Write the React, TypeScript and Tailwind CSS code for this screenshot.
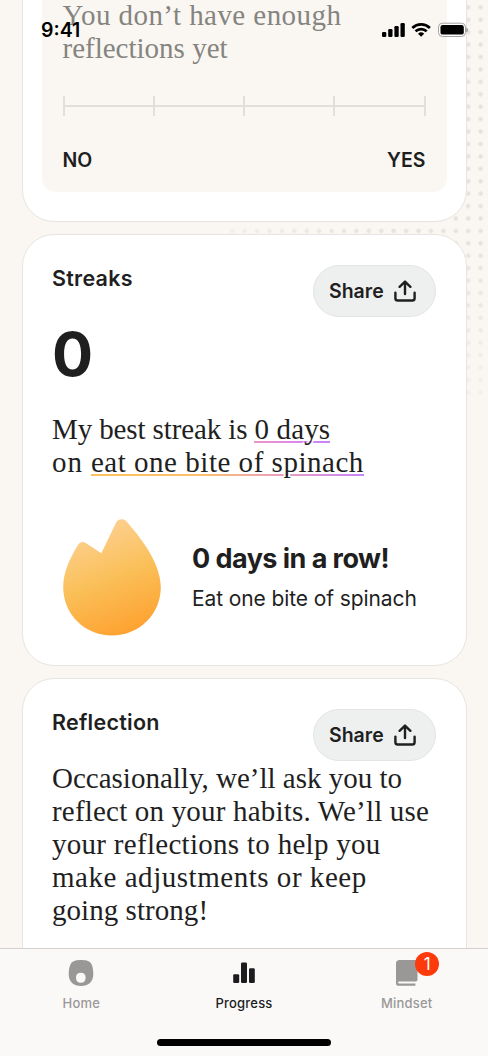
import type { ReactNode } from "react";
import clsx from "clsx";

const SERIF = "font-['Liberation_Serif',serif] text-[29px] leading-[33px]";

function ShareIcon() {
  return (
    <svg
      width="22"
      height="22"
      viewBox="0 0 22 22"
      fill="none"
      stroke="currentColor"
      strokeWidth="2.4"
      strokeLinecap="round"
      strokeLinejoin="round"
    >
      <path d="M11 14V1.800M5.600 6.800 11 1.600l5.400 5.200" />
      <path d="M1.400 12.600v5.600c0 1.600.7 2.300 2.300 2.300h14.600c1.600 0 2.300-.7 2.300-2.300v-5.600" />
    </svg>
  );
}

function ShareButton() {
  return (
    <button className="flex h-[52px] w-[123px] items-center justify-between rounded-full border border-[#e2e5e4] bg-[#eef0ef] pr-[19px] pl-[15px] text-[19.5px] font-semibold">
      <span className="pt-px">Share</span>
      <ShareIcon />
    </button>
  );
}

function Card({ className, children }: { className?: string; children: ReactNode }) {
  return (
    <section className={clsx("rounded-[32px] border border-[#e6e5e2] bg-white", className)}>
      {children}
    </section>
  );
}

function CardHeader({ title }: { title: string }) {
  return (
    <div className="flex items-start justify-between">
      <h2 className="text-[21.5px] leading-[26px] font-semibold tracking-[0.25px]">{title}</h2>
      <ShareButton />
    </div>
  );
}

function Scale() {
  return (
    <div className="mt-[30px] flex h-5 w-[363px] items-center justify-between bg-[linear-gradient(#e2dfd8,#e2dfd8)] bg-[length:100%_2px] bg-center bg-no-repeat">
      {[0, 1, 2, 3, 4].map((i) => (
        <span key={i} className="h-5 w-[2px] bg-[#e2dfd8]" />
      ))}
    </div>
  );
}

function Flame() {
  return (
    <svg width="98" height="118" viewBox="0 0 98 118">
      <defs>
        <linearGradient id="flame" x1="0.3" y1="0" x2="0.62" y2="1">
          <stop offset="0" stopColor="#fdd297" />
          <stop offset="0.5" stopColor="#fac05a" />
          <stop offset="1" stopColor="#fea230" />
        </linearGradient>
      </defs>
      <path
        fill="url(#flame)"
        d="M53.300 4.200C54.800 1 60.500.1 63.300 3.300C72 13.500 97.800 42 97.800 69C97.800 96.500 76 117.500 49 117.500C22 117.500.2 96.500.2 69C.2 53 8 38.500 15.300 26.500C17 23.700 20 23.200 22.800 25L38.300 35.200Z"
      />
    </svg>
  );
}

function StatusBar() {
  return (
    <div className="absolute inset-x-0 top-0 flex h-[60px] items-center justify-between pr-[20px] pl-[41px] text-black">
      <span className="text-[19.5px] leading-6 font-semibold">9:41</span>
      <svg width="87" height="16" viewBox="0 0 87 16">
        <rect x="1" y="10" width="4.300" height="5" rx="1.300" />
        <rect x="7.200" y="7" width="4.300" height="8" rx="1.300" />
        <rect x="13.400" y="4" width="4.300" height="11" rx="1.300" />
        <rect x="19.500" y="1" width="4.300" height="14" rx="1.300" />
        <g fill="none" stroke="#000" strokeWidth="2.700">
          <path d="M31.300 5.900a13 13 0 0 1 17.600 0" />
          <path d="M34.500 9.300a8.300 8.300 0 0 1 11.200 0" />
        </g>
        <path d="M40.100 14.700 37 11.700a4.500 4.500 0 0 1 6.200 0Z" />
        <rect x="57.500" y="1.200" width="27" height="13.300" rx="4" fill="#fff" fillOpacity=".5" stroke="#a3a3a3" />
        <rect x="59.500" y="3.100" width="23.300" height="9.500" rx="2.200" />
        <path d="M85.500 5.500c1.600.7 1.600 4.100 0 4.800Z" fill="#777" />
      </svg>
    </div>
  );
}

function HomeIcon() {
  return (
    <svg width="26" height="28" viewBox="0 0 26 28">
      <path
        fill="currentColor"
        fillRule="evenodd"
        d="M13 1c4.500 0 8.600.6 10.400 4 1.500 2.900 1.900 6.800 1.900 10.200C25.300 22.500 20.500 27 13 27S.7 22.500.7 15.200C.7 11.800 1.200 7.300 3 4.600 5 1.600 8.500 1 13 1Zm-.2 12.800c-3.300 0-4.800 1.700-4.800 4.900s1.700 5 4.800 5 4.800-1.800 4.800-5-1.500-4.900-4.800-4.900Z"
      />
    </svg>
  );
}

function ProgressIcon() {
  return (
    <svg width="24" height="28" viewBox="0 0 24 28" fill="currentColor">
      <rect x="1.200" y="15.300" width="6" height="8.700" rx="1.200" />
      <rect x="9" y="3.500" width="6" height="20.500" rx="1.200" />
      <rect x="17" y="9.300" width="5.800" height="14.700" rx="1.200" />
    </svg>
  );
}

function MindsetIcon() {
  return (
    <svg width="24" height="28" viewBox="0 0 24 28" fill="currentColor">
      <path d="M1 4.500C1 2.300 2.200 1 4.500 1h18v19.500c0 1.300-.6 2-2 2H4.500c-1 0-1.500.5-1.500 1.100s.5.900 1.200.9h16.200v2.300H3.800C2 26.800 1 26 1 24.200Z" />
    </svg>
  );
}

function Tab({
  label,
  active,
  badge,
  icon,
}: {
  label: string;
  active?: boolean;
  badge?: number;
  icon: ReactNode;
}) {
  return (
    <a
      className={clsx(
        "flex w-[163px] flex-col items-center",
        active ? "text-[#1c1c1e]" : "text-[#999897]",
      )}
    >
      <span className="relative">
        {icon}
        {badge && (
          <span className="absolute -top-[7px] left-[20.500px] flex size-[24px] items-center justify-center rounded-full bg-[#fc3a0b] text-[17px] leading-none text-white">
            {badge}
          </span>
        )}
      </span>
      <span className="mt-[8px] text-[13px] leading-[16px] font-medium tracking-[0.2px]">{label}</span>
    </a>
  );
}

function TabBar() {
  return (
    <nav className="absolute inset-x-0 bottom-0 h-[108px] border-t border-[#d3d2d0] bg-[#faf9f8]">
      <div className="flex justify-center pt-[10px]">
        <Tab label="Home" icon={<HomeIcon />} />
        <Tab label="Progress" active icon={<ProgressIcon />} />
        <Tab label="Mindset" badge={1} icon={<MindsetIcon />} />
      </div>
      <div className="mx-auto mt-[28px] h-[7px] w-[174px] rounded-full bg-black" />
    </nav>
  );
}

export default function App() {
  return (
    <div className="relative h-[1056px] w-[488px] overflow-hidden bg-[#faf7f2] font-['Inter',sans-serif] text-[#1f1f1f]">
      <div className="absolute top-0 right-0 h-[400px] w-[260px] bg-[radial-gradient(circle,#e7e3db_1.800px,transparent_2.600px)] [mask-image:radial-gradient(circle_at_225px_120px,#000_35%,transparent_95%)] bg-[length:12.430px_12.430px] bg-[position:10.400px_1.100px] [mask-size:100%_100%]" />

      <main className="relative flex flex-col gap-3 pr-[21.500px] pl-[21.500px]">
        <Card className="-mt-10 h-[262px] px-[19px]">
          <div className="h-[231px] rounded-[14px] bg-[#faf7f2] px-[21px] pt-[38px]">
            <p className={clsx(SERIF, "text-[#858480]")}>
              <span className="tracking-[0.440px]">You don’t have enough</span>
              <br />
              reflections yet
            </p>
            <div className="pt-px">
              <Scale />
            </div>
            <div className="mt-[32px] flex w-[363px] justify-between text-[19.5px] leading-6 font-semibold">
              <span>NO</span>
              <span>YES</span>
            </div>
          </div>
        </Card>

        <Card className="h-[432px] px-[29.500px] pt-[30px]">
          <CardHeader title="Streaks" />
          <p className="text-[61px] leading-[74px] font-bold">0</p>
          <p className={clsx(SERIF, "mt-[22px] whitespace-nowrap")}>
            <span className="tracking-[-0.120px]">My best streak is </span>
            <span className="bg-[linear-gradient(90deg,#f093c8,#c684fb)] bg-[length:100%_2px] bg-[position:0_28px] bg-no-repeat tracking-[0.150px] [text-shadow:2px_0_#fff,-2px_0_#fff]">
              0 days
            </span>
            <br />
            <span className="tracking-[0.900px]">on </span>
            <span className="bg-[linear-gradient(90deg,#fcc15c,#fbbf6c_40%,#eb9fc0_70%,#c684fb)] bg-[length:100%_2px] bg-[position:0_28px] bg-no-repeat tracking-[0.520px] [text-shadow:2px_0_#fff,-2px_0_#fff]">
              eat one bite of spinach
            </span>
          </p>
          <div className="mt-[39px] flex items-center gap-[31.500px] pl-[10.500px]">
            <Flame />
            <div>
              <p className="text-[27px] leading-[34px] font-bold tracking-[-0.550px]">0 days in a row!</p>
              <p className="mt-[10px] text-[21px] leading-[26px] tracking-[-0.1px]">Eat one bite of spinach</p>
            </div>
          </div>
        </Card>

        <Card className="h-[432px] px-[29.500px] pt-[30px]">
          <CardHeader title="Reflection" />
          <p className={clsx(SERIF, "mt-[1px] whitespace-nowrap")}>
            <span>Occasionally, we’ll ask you to</span>
            <br />
            <span className="tracking-[0.190px]">reflect on your habits. We’ll use</span>
            <br />
            <span className="tracking-[0.290px]">your reflections to help you</span>
            <br />
            <span className="tracking-[0.530px]">make adjustments or keep</span>
            <br />
            <span className="tracking-[0.050px]">going strong!</span>
          </p>
        </Card>
      </main>

      <StatusBar />
      <TabBar />
    </div>
  );
}
